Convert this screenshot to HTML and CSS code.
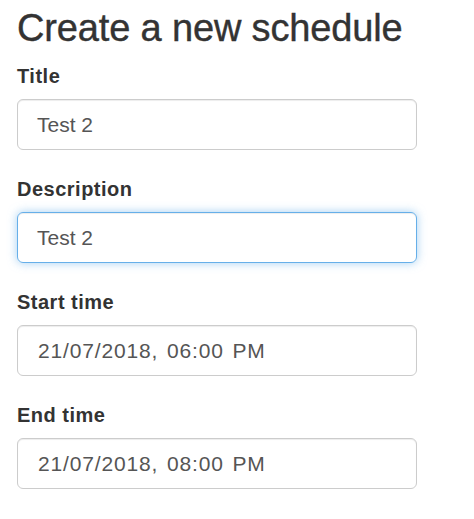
FILE: index.html
```html
<!DOCTYPE html>
<html>
<head>
<meta charset="utf-8">
<link rel="stylesheet" href="styles.css">
</head>
<body>
<div class="page">
  <h1 class="heading">Create a new schedule</h1>
  <form class="form">
    <div class="group">
      <label class="label">Title</label>
      <div class="control">Test 2</div>
    </div>
    <div class="group">
      <label class="label">Description</label>
      <div class="control focused">Test 2</div>
    </div>
    <div class="group">
      <label class="label">Start time</label>
      <div class="control date">21/07/2018, 06:00 PM</div>
    </div>
    <div class="group">
      <label class="label">End time</label>
      <div class="control date">21/07/2018, 08:00 PM</div>
    </div>
  </form>
</div>
</body>
</html>
```
FILE: styles.css
```css
html, body {
  margin: 0;
  padding: 0;
  background: #fff;
}
.page {
  padding: 7px 17px 0 17px;
  font-family: "Liberation Sans", Arial, sans-serif;
  color: #333;
}
.heading {
  margin: 0 0 13px 0;
  font-size: 38px;
  line-height: 42px;
  font-weight: normal;
  letter-spacing: -0.15px;
  -webkit-text-stroke: 0.4px #333;
  color: #333;
}
.form {
  display: flex;
  flex-direction: column;
  gap: 25px;
}
.group {
  display: flex;
  flex-direction: column;
}
.label {
  font-size: 20px;
  line-height: 29px;
  font-weight: bold;
  letter-spacing: 0.5px;
  margin-bottom: 8px;
  color: #333;
}
.control {
  box-sizing: border-box;
  width: 400px;
  height: 51px;
  border: 1px solid #ccc;
  border-radius: 6px;
  padding: 0 19px;
  display: flex;
  align-items: center;
  font-size: 21px;
  color: #555;
  box-shadow: inset 0 1px 1px rgba(0,0,0,0.075);
}
.control.focused {
  border-color: #66afe9;
  box-shadow: inset 0 1px 1px rgba(0,0,0,0.075), 0 0 10px rgba(102,175,233,0.6);
}
.control.date {
  padding-left: 20px;
  letter-spacing: 0.85px;
  word-spacing: 2px;
}
```
